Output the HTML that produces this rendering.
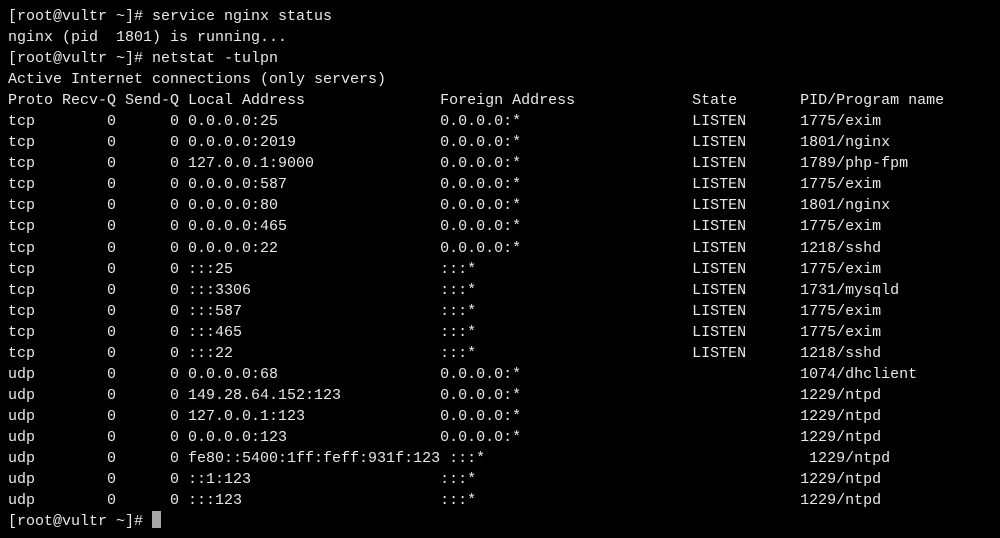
<!DOCTYPE html>
<html><head><meta charset="utf-8"><style>
html,body{margin:0;padding:0;background:#000;width:1000px;height:538px;overflow:hidden}
pre{margin:0;position:absolute;left:8px;top:6px;font-family:"Liberation Mono",monospace;font-size:15px;line-height:21.05px;color:#e8e8e8}
.cur{display:inline-block;width:9px;height:17px;background:#a8a8a8;vertical-align:-3px}
</style></head><body><pre>[root@vultr ~]# service nginx status
nginx (pid  1801) is running...
[root@vultr ~]# netstat -tulpn
Active Internet connections (only servers)
Proto Recv-Q Send-Q Local Address               Foreign Address             State       PID/Program name
tcp        0      0 0.0.0.0:25                  0.0.0.0:*                   LISTEN      1775/exim
tcp        0      0 0.0.0.0:2019                0.0.0.0:*                   LISTEN      1801/nginx
tcp        0      0 127.0.0.1:9000              0.0.0.0:*                   LISTEN      1789/php-fpm
tcp        0      0 0.0.0.0:587                 0.0.0.0:*                   LISTEN      1775/exim
tcp        0      0 0.0.0.0:80                  0.0.0.0:*                   LISTEN      1801/nginx
tcp        0      0 0.0.0.0:465                 0.0.0.0:*                   LISTEN      1775/exim
tcp        0      0 0.0.0.0:22                  0.0.0.0:*                   LISTEN      1218/sshd
tcp        0      0 :::25                       :::*                        LISTEN      1775/exim
tcp        0      0 :::3306                     :::*                        LISTEN      1731/mysqld
tcp        0      0 :::587                      :::*                        LISTEN      1775/exim
tcp        0      0 :::465                      :::*                        LISTEN      1775/exim
tcp        0      0 :::22                       :::*                        LISTEN      1218/sshd
udp        0      0 0.0.0.0:68                  0.0.0.0:*                               1074/dhclient
udp        0      0 149.28.64.152:123           0.0.0.0:*                               1229/ntpd
udp        0      0 127.0.0.1:123               0.0.0.0:*                               1229/ntpd
udp        0      0 0.0.0.0:123                 0.0.0.0:*                               1229/ntpd
udp        0      0 fe80::5400:1ff:feff:931f:123 :::*                                    1229/ntpd
udp        0      0 ::1:123                     :::*                                    1229/ntpd
udp        0      0 :::123                      :::*                                    1229/ntpd
[root@vultr ~]# <span class="cur"></span></pre></body></html>
